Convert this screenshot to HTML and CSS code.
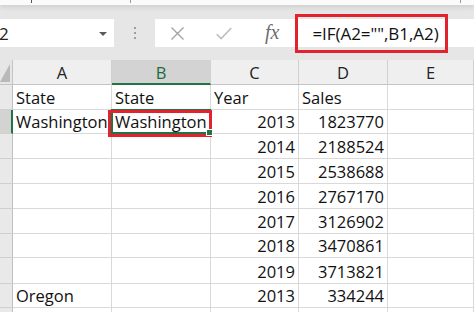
FILE: index.html
```html
<!DOCTYPE html>
<html>
<head>
<meta charset="utf-8">
<link rel="stylesheet" href="styles.css">
</head>
<body>
<div class="app">
  <div class="topstrip">
    <span class="tick t1"></span><span class="tick t2"></span><span class="tick t3"></span>
  </div>
  <div class="fbar">
    <div class="namebox">
      <span class="nb-text">2</span>
      <svg class="caret" width="8" height="4" viewBox="0 0 8 4"><path d="M0 0H8L4 4Z" fill="#5a5a5a"/></svg>
    </div>
    <div class="split">
      <span class="dot"></span><span class="dot"></span><span class="dot"></span>
    </div>
    <div class="formula">
      <svg class="btn-x" width="15" height="13" viewBox="0 0 15 13"><path d="M1.5 0.5L13.5 12.5M13.5 0.5L1.5 12.5" stroke="#a3a3a3" stroke-width="1.4" fill="none"/></svg>
      <svg class="btn-ok" width="16" height="13" viewBox="0 0 16 13"><path d="M0.8 7.2L5.2 11.6L15.2 1" stroke="#bdbdbd" stroke-width="1.6" fill="none"/></svg>
      <span class="fx">fx</span>
      <div class="input">=IF(A2="",B1,A2)</div>
    </div>
  </div>
  <div class="sheet">
    <div class="hd corner"><svg width="12" height="24" viewBox="0 0 12 24"><path d="M10 4V22H0Z" fill="#b9b9b9"/></svg></div>
    <div class="hd col">A</div>
    <div class="hd col sel">B</div>
    <div class="hd col">C</div>
    <div class="hd col">D</div>
    <div class="hd col">E</div>

    <div class="hd row"></div><div class="c">State</div><div class="c">State</div><div class="c">Year</div><div class="c">Sales</div><div class="c"></div>
    <div class="hd row selrow"></div><div class="c">Washington</div><div class="c active">Washington</div><div class="c n">2013</div><div class="c n">1823770</div><div class="c"></div>
    <div class="hd row"></div><div class="c"></div><div class="c"></div><div class="c n">2014</div><div class="c n">2188524</div><div class="c"></div>
    <div class="hd row"></div><div class="c"></div><div class="c"></div><div class="c n">2015</div><div class="c n">2538688</div><div class="c"></div>
    <div class="hd row"></div><div class="c"></div><div class="c"></div><div class="c n">2016</div><div class="c n">2767170</div><div class="c"></div>
    <div class="hd row"></div><div class="c"></div><div class="c"></div><div class="c n">2017</div><div class="c n">3126902</div><div class="c"></div>
    <div class="hd row"></div><div class="c"></div><div class="c"></div><div class="c n">2018</div><div class="c n">3470861</div><div class="c"></div>
    <div class="hd row"></div><div class="c"></div><div class="c"></div><div class="c n">2019</div><div class="c n">3713821</div><div class="c"></div>
    <div class="hd row"></div><div class="c">Oregon</div><div class="c"></div><div class="c n">2013</div><div class="c n">334244</div><div class="c"></div>
    <div class="hd row"></div><div class="c"></div><div class="c"></div><div class="c"></div><div class="c"></div><div class="c"></div>
  </div>
  <div class="annot annot-formula"></div>
  <div class="annot annot-cell"></div>
</div>
</body>
</html>
```

FILE: styles.css
```css
* { box-sizing: border-box; }
html, body { margin: 0; padding: 0; }
body {
  width: 474px;
  height: 312px;
  overflow: hidden;
  background: #e6e6e6;
  font-family: "Open Sans", "Liberation Sans", sans-serif;
}
.app {
  position: relative;
  width: 474px;
  height: 312px;
  overflow: hidden;
  background: #e6e6e6;
}
.topstrip {
  position: relative;
  height: 5px;
  background: #fbfbfb;
  box-shadow: 0 2px 5px rgba(0,0,0,0.12);
}
.tick {
  position: absolute;
  top: 0;
  width: 1px;
  height: 3px;
  background: #9a9a9a;
}
.t1 { left: 31px; background: #555; }
.t2 { left: 130px; }
.t3 { left: 460px; }

.fbar {
  display: flex;
  height: 28px;
  margin-top: 14px;
}
.namebox {
  width: 114px;
  background: #fff;
  display: flex;
  align-items: center;
  justify-content: space-between;
  padding-right: 7px;
}
.nb-text {
  font-size: 17px;
  color: #222;
  margin-left: -1px;
}
.caret { display: block; margin-top: 1px; }
.split {
  width: 41px;
  display: flex;
  flex-direction: column;
  align-items: center;
  justify-content: center;
  gap: 3px;
}
.dot {
  width: 2px;
  height: 2px;
  background: #9d9d9d;
}
.formula {
  flex: 1;
  background: #fff;
  display: flex;
  align-items: center;
  padding-left: 15px;
}
.btn-x { display: block; margin-top: 1px; }
.btn-ok { display: block; margin-left: 31px; margin-top: 0px; }
.fx {
  margin-left: 33px;
  font-family: "Liberation Serif", "DejaVu Serif", serif;
  font-style: italic;
  font-size: 20px;
  color: #6e6e6e;
  line-height: 1;
  margin-top: -2px;
}
.input {
  margin-left: 33px;
  font-size: 17px;
  color: #111;
  white-space: nowrap;
  letter-spacing: -0.05px;
}

.sheet {
  margin-top: 13px;
  display: grid;
  grid-template-columns: 13px 99px 99px 88px 89px 1fr;
  grid-template-rows: 25px 25px 24px 25px 25px 25px 25px 24px 26px 24px 20px;
  background: #fff;
  font-size: 16.5px;
  color: #111;
}
.c {
  border-right: 1px solid #d9d9d9;
  border-bottom: 1px solid #d9d9d9;
  display: flex;
  align-items: flex-end;
  line-height: 16px;
  padding: 0 3px 3px 3px;
  white-space: nowrap;
  overflow: visible;
}
.c.n { justify-content: flex-end; }
.hd {
  background: #efefef;
  border-right: 1px solid #d0d0d0;
  border-bottom: 1px solid #c4c4c4;
}
.col {
  display: flex;
  align-items: flex-end;
  justify-content: center;
  line-height: 16px;
  padding-bottom: 3px;
  color: #222;
}
.col.sel {
  background: #d3d3d3;
  color: #1e6b3f;
  border-bottom: 2px solid #217346;
  padding-bottom: 2px;
}
.corner {
  background: #e6e6e6;
  border-right: 1px solid #c4c4c4;
}
.corner svg { display: block; }
.row {
  background: #e9e9e9;
  border-right: 1px solid #bfbfbf;
  border-bottom: 1px solid #d0d0d0;
}
.row.selrow {
  background: #d3d3d3;
  border-right: 2px solid #217346;
}
.active {
  position: relative;
}
.active::after {
  content: "";
  position: absolute;
  left: -1px;
  top: -1px;
  right: -1px;
  bottom: -1px;
  border: 2px solid #217346;
}
.active::before {
  content: "";
  position: absolute;
  right: -3px;
  bottom: -3px;
  width: 5px;
  height: 5px;
  background: #217346;
  border: 1px solid #fff;
  z-index: 1;
}
.annot {
  position: absolute;
  border: 3px solid #e2222c;
  pointer-events: none;
}
.annot-formula {
  left: 295px;
  top: 14px;
  width: 153px;
  height: 39px;
}
.annot-cell {
  left: 108px;
  top: 110px;
  width: 104px;
  height: 27px;
}
```
